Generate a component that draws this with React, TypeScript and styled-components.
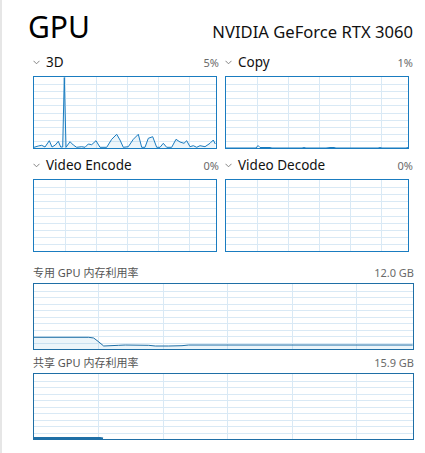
import React from 'react'
import styled, { createGlobalStyle } from 'styled-components'

const GlobalStyle = createGlobalStyle`
  html, body {
    margin: 0;
    padding: 0;
    background: #ffffff;
  }
  body {
    font-family: "Segoe UI", "Noto Sans", "Noto Sans CJK SC", sans-serif;
  }
`

const Page = styled.div`
  width: 425px;
  height: 453px;
  box-sizing: border-box;
  border-left: 2px solid #e6e6e6;
  background: #fff;
  overflow: hidden;
`

const Header = styled.div`
  height: 48px;
  display: flex;
  justify-content: space-between;
  align-items: baseline;
  padding: 5px 12px 0 26px;
  box-sizing: border-box;
`

const Title = styled.div`
  font-size: 30px;
  line-height: 44px;
  color: #000;
`

const Model = styled.div`
  font-size: 16.6px;
  color: #111;
`

const EngineGrid = styled.div`
  display: grid;
  grid-template-columns: 186px 188px;
  column-gap: 6px;
  row-gap: 2px;
  margin-left: 31px;
`

const Cell = styled.div`
  display: flex;
  flex-direction: column;
`

const LabelRow = styled.div<{ $h: number }>`
  height: ${(p) => p.$h}px;
  display: flex;
  align-items: center;
  justify-content: space-between;
`

const EngineName = styled.div`
  display: flex;
  align-items: center;
  gap: 6px;
  font-size: 13.5px;
  color: #111;
`

const Small = styled.div`
  font-size: 11px;
  color: #6a6a6a;
`

const MemLabel = styled.div`
  font-size: 11px;
  color: #555;
  font-family: "Segoe UI", "Noto Sans", "Noto Sans CJK SC", sans-serif;
`

const Frame = styled.div<{ $w: number; $h: number; $c: string }>`
  width: ${(p) => p.$w}px;
  height: ${(p) => p.$h}px;
  border: 1px solid ${(p) => p.$c};
  box-sizing: border-box;
  background: #fff;
  svg {
    display: block;
  }
`

const MemSection = styled.div<{ $top: number }>`
  margin: ${(p) => p.$top}px 0 0 31px;
  width: 381px;
`

const Chevron = () => (
  <svg width="7" height="5" viewBox="0 0 7 5">
    <path d="M0.5 0.8 L3.5 3.8 L6.5 0.8" fill="none" stroke="#777" strokeWidth="0.9" />
  </svg>
)

type Pt = [number, number]

interface ChartProps {
  w: number
  h: number
  color: string
  colStep: number
  colStart: number
  series?: Pt[]
  fillSeries?: boolean
  strokeW?: number
}

const Chart: React.FC<ChartProps> = ({ w, h, color, colStep, colStart, series, fillSeries, strokeW }) => {
  const iw = w - 2
  const ih = h - 2
  const rows: number[] = []
  for (let i = 1; i < 10; i++) rows.push(Math.round((ih * i) / 10) + 0.5)
  const cols: number[] = []
  for (let x = colStart; x < iw; x += colStep) cols.push(Math.round(x) + 0.5)
  const line = series ? series.map((p) => p.join(',')).join(' ') : ''
  const area = series && fillSeries
    ? `${series[0][0]},${ih} ${line} ${series[series.length - 1][0]},${ih}`
    : ''
  return (
    <Frame $w={w} $h={h} $c={color}>
      <svg width={iw} height={ih}>
        {rows.map((y) => (
          <line key={'r' + y} x1={0} x2={iw} y1={y} y2={y} stroke="#d9e9f5" strokeWidth={1} shapeRendering="crispEdges" />
        ))}
        {cols.map((x) => (
          <line key={'c' + x} x1={x} x2={x} y1={0} y2={ih} stroke="#d9e9f5" strokeWidth={1} shapeRendering="crispEdges" />
        ))}
        {area && <polygon points={area} fill="rgba(17,125,187,0.08)" />}
        {series && <polyline points={line} fill="none" stroke={color} strokeWidth={strokeW || 1} strokeLinejoin="round" />}
      </svg>
    </Frame>
  )
}

// sampled from the reference at 3x, mapped back to chart space
const raw3d: Pt[] = [
  [42, 292], [55, 288], [65, 286], [75, 291], [88, 272], [96, 291], [106, 285], [115, 274], [122, 291],
  [128, 291], [133, 78], [138, 292], [150, 275], [160, 285], [170, 292], [185, 290], [195, 292],
  [205, 282], [215, 284], [228, 272], [240, 292], [260, 292], [275, 268], [290, 253], [300, 270],
  [310, 292], [325, 290], [340, 268], [355, 253], [365, 292], [375, 292], [385, 265], [398, 260],
  [410, 292], [420, 292], [430, 280], [440, 292], [455, 292], [468, 268], [480, 276], [492, 280],
  [500, 272], [510, 290], [520, 287], [530, 292], [540, 287], [555, 290], [570, 280], [580, 270], [586, 282],
]
const series3d: Pt[] = raw3d.map(([x, y]) => [+(x / 3 - 14).toFixed(1), Math.max(0.5, +(y / 3 - 27).toFixed(1))])

const seriesCopy: Pt[] = [
  [0, 71], [30, 71], [32, 68.5], [34, 70.5], [38, 70.5], [44, 70.5], [46, 71], [76, 71], [78, 70.5], [80, 71],
  [100, 71], [104, 70.5], [108, 70.5], [110, 71], [152, 71], [154, 70.5], [156, 71], [180, 71], [182, 70.5],
]

const rawMem1: Pt[] = [
  [35, 232], [200, 232], [215, 234], [228, 244], [245, 258], [290, 256], [310, 255], [380, 256],
  [400, 258], [440, 258], [480, 257], [500, 255], [1172, 255],
]
const seriesMem1: Pt[] = rawMem1.map(([x, y]) => [+(x / 3 - 12).toFixed(1), +(y / 3 - 24).toFixed(1)])

const seriesMem2: Pt[] = [[0, 64], [66, 64], [69, 64.5]]

const engines = [
  { name: '3D', pct: '5%', series: series3d, fill: true },
  { name: 'Copy', pct: '1%', series: seriesCopy, fill: false },
  { name: 'Video Encode', pct: '0%' },
  { name: 'Video Decode', pct: '0%' },
]

const App: React.FC = () => {
  return (
    <Page>
      <GlobalStyle />
      <Header>
        <Title>GPU</Title>
        <Model>NVIDIA GeForce RTX 3060</Model>
      </Header>
      <EngineGrid>
        {engines.map((e) => (
          <Cell key={e.name}>
            <LabelRow $h={28}>
              <EngineName>
                <Chevron />
                {e.name}
              </EngineName>
              <Small>{e.pct}</Small>
            </LabelRow>
            <Chart w={184} h={73} color="#1a7cc0" colStep={31} colStart={30.5} series={e.series} fillSeries={e.fill} />
          </Cell>
        ))}
      </EngineGrid>
      <MemSection $top={9}>
        <LabelRow $h={22}>
          <MemLabel>专用 GPU 内存利用率</MemLabel>
          <Small>12.0 GB</Small>
        </LabelRow>
        <Chart w={381} h={67} color="#1f6fa6" colStep={64.5} colStart={64} series={seriesMem1} fillSeries />
      </MemSection>
      <MemSection $top={1}>
        <LabelRow $h={22}>
          <MemLabel>共享 GPU 内存利用率</MemLabel>
          <Small>15.9 GB</Small>
        </LabelRow>
        <Chart w={381} h={67} color="#1f6fa6" colStep={64.5} colStart={64} series={seriesMem2} strokeW={2} />
      </MemSection>
    </Page>
  )
}

export default App
